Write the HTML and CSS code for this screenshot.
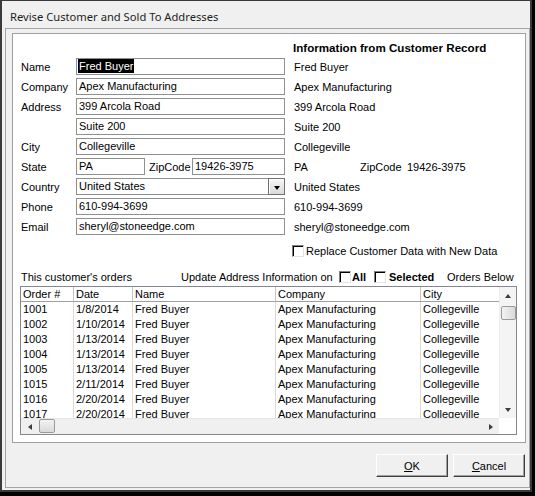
FILE: index.html
```html
<!DOCTYPE html>
<html lang="en">
<head>
    <meta charset="UTF-8">
    <title>Revise Customer and Sold To Addresses</title>
    <link rel="stylesheet" href="styles.css">
</head>
<body>
    <div class="window">
        <div class="titlebar">Revise Customer and Sold To Addresses</div>
        <div class="client">
            <div class="panel">
                <div class="form">
                    <div></div>
                    <div></div>
                    <div class="info-head">Information from Customer Record</div>

                    <div class="lbl">Name</div>
                    <div class="field"><span class="sel">Fred Buyer</span></div>
                    <div class="val">Fred Buyer</div>

                    <div class="lbl">Company</div>
                    <div class="field">Apex Manufacturing</div>
                    <div class="val">Apex Manufacturing</div>

                    <div class="lbl">Address</div>
                    <div class="field">399 Arcola Road</div>
                    <div class="val">399 Arcola Road</div>

                    <div class="lbl"></div>
                    <div class="field">Suite 200</div>
                    <div class="val">Suite 200</div>

                    <div class="lbl">City</div>
                    <div class="field">Collegeville</div>
                    <div class="val">Collegeville</div>

                    <div class="lbl">State</div>
                    <div class="state-row">
                        <div class="field state">PA</div>
                        <span class="zip-lbl">ZipCode</span>
                        <div class="field zip">19426-3975</div>
                    </div>
                    <div class="val state-val">
                        <span class="v-state">PA</span>
                        <span class="v-zip">ZipCode</span>
                        <span>19426-3975</span>
                    </div>

                    <div class="lbl">Country</div>
                    <div class="field combo">
                        <span>United States</span>
                        <span class="drop"><i></i></span>
                    </div>
                    <div class="val">United States</div>

                    <div class="lbl">Phone</div>
                    <div class="field">610-994-3699</div>
                    <div class="val">610-994-3699</div>

                    <div class="lbl">Email</div>
                    <div class="field">sheryl@stoneedge.com</div>
                    <div class="val">sheryl@stoneedge.com</div>
                </div>

                <div class="replace"><span class="check"></span>Replace Customer Data with New Data</div>

                <div class="orders-bar">
                    <span class="orders-title">This customer's orders</span>
                    <span class="upd">Update Address Information on</span>
                    <span class="check"></span>
                    <b class="opt-all">All</b>
                    <span class="check"></span>
                    <b class="opt-sel">Selected</b>
                    <span>Orders Below</span>
                </div>

                <div class="grid-box">
                    <div class="rows">
                        <div class="row head"><span>Order #</span><span>Date</span><span>Name</span><span>Company</span><span>City</span></div>
                        <div class="row"><span>1001</span><span>1/8/2014</span><span>Fred Buyer</span><span>Apex Manufacturing</span><span>Collegeville</span></div>
                        <div class="row"><span>1002</span><span>1/10/2014</span><span>Fred Buyer</span><span>Apex Manufacturing</span><span>Collegeville</span></div>
                        <div class="row"><span>1003</span><span>1/13/2014</span><span>Fred Buyer</span><span>Apex Manufacturing</span><span>Collegeville</span></div>
                        <div class="row"><span>1004</span><span>1/13/2014</span><span>Fred Buyer</span><span>Apex Manufacturing</span><span>Collegeville</span></div>
                        <div class="row"><span>1005</span><span>1/13/2014</span><span>Fred Buyer</span><span>Apex Manufacturing</span><span>Collegeville</span></div>
                        <div class="row"><span>1015</span><span>2/11/2014</span><span>Fred Buyer</span><span>Apex Manufacturing</span><span>Collegeville</span></div>
                        <div class="row"><span>1016</span><span>2/20/2014</span><span>Fred Buyer</span><span>Apex Manufacturing</span><span>Collegeville</span></div>
                        <div class="row"><span>1017</span><span>2/20/2014</span><span>Fred Buyer</span><span>Apex Manufacturing</span><span>Collegeville</span></div>
                    </div>
                    <div class="vscroll">
                        <div class="sb-btn"><i class="arr-up"></i></div>
                        <div class="vthumb"></div>
                        <div class="sb-btn sb-end"><i class="arr-down"></i></div>
                    </div>
                    <div class="hscroll">
                        <div class="sb-btn"><i class="arr-left"></i></div>
                        <div class="hthumb"></div>
                        <div class="sb-btn sb-end"><i class="arr-right"></i></div>
                    </div>
                    <div class="corner"></div>
                </div>
            </div>

            <div class="buttons">
                <button class="btn"><u>O</u>K</button>
                <button class="btn"><u>C</u>ancel</button>
            </div>
        </div>
    </div>
</body>
</html>
```

FILE: styles.css
```css
body {
    margin: 0;
    background-color: #000;
    font-family: "Liberation Sans", Arial, sans-serif;
    font-size: 11px;
    color: #000;
}
.window {
    width: 532px;
    height: 492px;
    box-sizing: border-box;
    border: solid #3a3a3a;
    border-width: 1px 2px 2px 2px;
    background-color: #f0f0f0;
    display: flex;
    flex-direction: column;
}
.titlebar {
    height: 27px;
    box-sizing: border-box;
    padding: 6px 0 0 8px;
    font-family: "Noto Sans", sans-serif;
    font-size: 11.2px;
    line-height: 20px;
    color: #1e1e1e;
}
.client {
    flex: 1;
    margin: 0 0 2px 3px;
    border: 1px solid #a5a5a5;
    padding: 4px 3px 0 6px;
    display: flex;
    flex-direction: column;
}
.panel {
    width: 514px;
    height: 410px;
    box-sizing: border-box;
    border: 1px solid #a0a0a0;
    background-color: #fff;
    padding: 4px 0 0 8px;
}

/* address form */
.form {
    display: grid;
    grid-template-columns: 55px 209px auto;
    grid-auto-rows: 17px;
    row-gap: 3px;
    align-items: center;
}
.info-head {
    align-self: end;
    line-height: 14px;
    font-size: 11.6px;
    font-weight: bold;
    margin-left: 8px;
    white-space: nowrap;
}
.val {
    margin-left: 9px;
}
.lbl {
    line-height: 14px;
}
.field {
    height: 17px;
    box-sizing: border-box;
    border: 1px solid #8e8f8f;
    background-color: #fff;
    padding-left: 2px;
    line-height: 15px;
    white-space: nowrap;
    overflow: hidden;
}
.sel {
    display: inline-block;
    line-height: 14px;
    margin-left: -1px;
    padding: 0 1px;
    background-color: #000;
    color: #fff;
}
.state-row {
    display: flex;
    align-items: center;
}
.field.state {
    width: 69px;
}
.zip-lbl {
    margin-left: 4px;
}
.field.zip {
    width: 93px;
    margin-left: auto;
}
.state-val {
    display: flex;
}
.v-state {
    width: 66px;
}
.v-zip {
    width: 47px;
}
.combo {
    display: flex;
    overflow: visible;
}
.drop {
    width: 17px;
    height: 17px;
    box-sizing: border-box;
    margin: -1px -1px -1px auto;
    border: 1px solid #6f6f6f;
    background: linear-gradient(#f6f6f6, #dadada);
    box-shadow: inset 1px 1px #fff;
    display: flex;
    justify-content: center;
    align-items: center;
}
.drop i {
    margin-top: 2px;
    border-style: solid;
    border-width: 4px 3px 0 3px;
    border-color: #000 transparent transparent transparent;
}

/* check boxes */
.check {
    display: inline-block;
    width: 12px;
    height: 12px;
    box-sizing: border-box;
    border: 1px solid;
    border-color: #808080 #e3e3e3 #e3e3e3 #808080;
    box-shadow: inset 1px 1px #000;
    background-color: #fff;
    flex-shrink: 0;
}
.replace {
    margin: 9px 0 0 271px;
    height: 14px;
    display: flex;
    align-items: center;
}
.replace .check {
    margin-right: 2px;
}
.orders-bar {
    margin-top: 12px;
    height: 14px;
    display: flex;
    align-items: center;
    white-space: nowrap;
}
.orders-title {
    width: 160px;
}
.upd {
    width: 158px;
}
.opt-all {
    width: 22px;
    margin-left: 1px;
}
.opt-sel {
    width: 58px;
    margin-left: 3px;
}

/* orders grid */
.grid-box {
    margin: 2px 0 0 -1px;
    width: 497px;
    height: 149px;
    box-sizing: border-box;
    border: 1px solid #828790;
    display: grid;
    grid-template-columns: 478px 17px;
    grid-template-rows: 131px 16px;
}
.rows {
    overflow: hidden;
}
.row {
    display: grid;
    grid-template-columns: 53px 59px 143px 145px 78px;
    height: 15px;
    line-height: 15px;
}
.row span {
    padding-left: 2px;
    border-right: 1px solid #d9d9d9;
    white-space: nowrap;
    overflow: hidden;
}
.row span:last-child {
    border-right: none;
}
.row.head {
    box-sizing: border-box;
    border-bottom: 1px solid #a0a0a0;
    line-height: 14px;
}
.row.head span {
    border-right-color: #c5c5c5;
}
.vscroll {
    background-color: #f4f4f4;
    border-left: 1px solid #ececec;
    display: flex;
    flex-direction: column;
    align-items: center;
}
.hscroll {
    background-color: #f0f0f0;
    border-top: 1px solid #e6e6e6;
    display: flex;
}
.corner {
    background-color: #fff;
}
.sb-btn {
    width: 17px;
    height: 17px;
    flex-shrink: 0;
    display: flex;
    justify-content: center;
    align-items: center;
}
.hscroll .sb-btn {
    height: 15px;
}
.sb-end {
    margin-top: auto;
}
.hscroll .sb-end {
    margin-top: 0;
    margin-left: auto;
}
.vthumb {
    width: 15px;
    height: 14px;
    box-sizing: border-box;
    margin-top: 2px;
    border: 1px solid #9a9a9a;
    border-radius: 2px;
    background: linear-gradient(90deg, #f3f3f3, #d9d9d9);
}
.hthumb {
    width: 16px;
    height: 14px;
    box-sizing: border-box;
    margin: 0 0 0 1px;
    border: 1px solid #9a9a9a;
    border-radius: 2px;
    background: linear-gradient(#f3f3f3, #d9d9d9);
}
.sb-btn i {
    border-style: solid;
    border-color: transparent;
}
.arr-up {
    border-width: 0 3px 4px 3px;
    border-bottom-color: #3c3c3c !important;
}
.arr-down {
    border-width: 4px 3px 0 3px;
    border-top-color: #3c3c3c !important;
}
.arr-left {
    border-width: 3px 4px 3px 0;
    border-right-color: #3c3c3c !important;
}
.arr-right {
    border-width: 3px 0 3px 4px;
    border-left-color: #3c3c3c !important;
}

/* dialog buttons */
.buttons {
    display: flex;
    justify-content: flex-end;
    gap: 5px;
    margin: 11px 1px 0 0;
}
.btn {
    width: 72px;
    height: 23px;
    box-sizing: border-box;
    padding: 0;
    font-family: "Liberation Sans", Arial, sans-serif;
    font-size: 11px;
    color: #000;
    background-color: #f0f0f0;
    border: 1px solid;
    border-color: #fff #404040 #404040 #fff;
    box-shadow: inset -1px -1px #a0a0a0;
}
```
